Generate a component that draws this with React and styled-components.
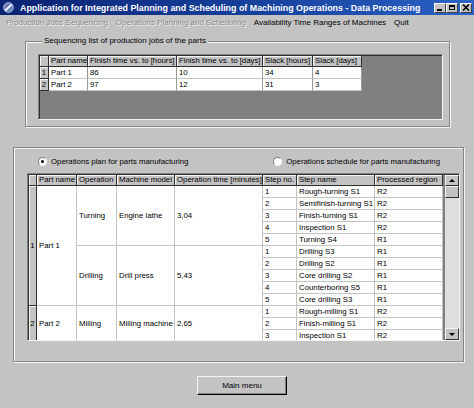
import React from 'react';
import styled, { createGlobalStyle } from 'styled-components';

const GlobalStyle = createGlobalStyle`
  html, body {
    margin: 0;
    padding: 0;
    background: #c3c3c3;
  }
  body {
    font-family: "Liberation Sans", Arial, sans-serif;
  }
`;

const sequencing = [
  ['Part 1', '86', '10', '34', '4'],
  ['Part 2', '97', '12', '31', '3'],
];

const plan = [
  {
    part: 'Part 1',
    ops: [
      {
        op: 'Turning', machine: 'Engine lathe', time: '3,04',
        steps: [['Rough-turning S1', 'R2'], ['Semifinish-turning S1', 'R2'], ['Finish-turning S1', 'R2'], ['Inspection S1', 'R2'], ['Turning S4', 'R1']],
      },
      {
        op: 'Drilling', machine: 'Drill press', time: '5,43',
        steps: [['Drilling S3', 'R1'], ['Drilling S2', 'R1'], ['Core drilling S2', 'R1'], ['Counterboring S5', 'R1'], ['Core drilling S3', 'R1']],
      },
    ],
  },
  {
    part: 'Part 2',
    ops: [
      {
        op: 'Milling', machine: 'Milling machine', time: '2,65',
        steps: [['Rough-milling S1', 'R2'], ['Finish-milling S1', 'R2'], ['Inspection S1', 'R2']],
      },
    ],
  },
];

const seqCols = [
  { w: 9, label: '' },
  { w: 39, label: 'Part name' },
  { w: 89, label: 'Finish time vs. to [hours]' },
  { w: 86, label: 'Finish time vs. to [days]' },
  { w: 50, label: 'Slack [hours]' },
  { w: 49, label: 'Slack [days]' },
];

const planCols = [
  { w: 8, label: '' },
  { w: 40, label: 'Part name' },
  { w: 40, label: 'Operation' },
  { w: 58, label: 'Machine model' },
  { w: 88, label: 'Operation time [minutes]' },
  { w: 34, label: 'Step no.' },
  { w: 78, label: 'Step name' },
  { w: 68, label: 'Processed region' },
];

function AppIcon() {
  return (
    <IconBox viewBox="0 0 12 12">
      <circle cx="6" cy="6" r="5.3" fill="#5d7fc9" stroke="#e8e8f0" strokeWidth="0.8" />
      <path d="M2.5 9.5 L9.5 2.5" stroke="#fff" strokeWidth="2" />
      <path d="M3 4 L5 3 L4 6 Z" fill="#e05a3a" />
      <path d="M7 8 L9 7 L8 9.5 Z" fill="#6cc060" />
    </IconBox>
  );
}

function Radio({ checked, children }) {
  return (
    <RadioLabel>
      <RadioCircle $checked={checked} />
      {children}
    </RadioLabel>
  );
}

export default function App() {
  return (
    <>
      <GlobalStyle />
      <Window>
        <TitleBar>
          <AppIcon />
          <TitleText>Application for Integrated Planning and Scheduling of Machining Operations - Data Processing</TitleText>
          <Controls>
            <CtrlButton>
              <MinGlyph />
            </CtrlButton>
            <CtrlButton>
              <MaxGlyph />
            </CtrlButton>
            <CtrlButton $gap>
              <svg width="8" height="7" viewBox="0 0 8 7">
                <path d="M1 0.5 L7 6.5 M7 0.5 L1 6.5" stroke="#000" strokeWidth="1.6" />
              </svg>
            </CtrlButton>
          </Controls>
        </TitleBar>

        <MenuBar>
          <MenuItem $disabled>Production Jobs Sequencing</MenuItem>
          <MenuItem $disabled>Operations Planning and Scheduling</MenuItem>
          <MenuItem>Availability Time Ranges of Machines</MenuItem>
          <MenuItem>Quit</MenuItem>
        </MenuBar>

        <Group $margin="7px 24px 0 25px" $padding="8px 6px 6px 12px">
          <Legend>Sequencing list of production jobs of the parts</Legend>
          <Grid $height={66}>
            <Table $width={322}>
              <colgroup>
                {seqCols.map((c, i) => <Col key={i} $w={c.w} />)}
              </colgroup>
              <thead>
                <tr>
                  {seqCols.map((c, i) => <HeadCell key={i}>{c.label}</HeadCell>)}
                </tr>
              </thead>
              <tbody>
                {sequencing.map((row, i) => (
                  <tr key={i}>
                    <IndCell>{i + 1}</IndCell>
                    {row.map((v, j) => <Cell key={j} $dark>{v}</Cell>)}
                  </tr>
                ))}
              </tbody>
            </Table>
          </Grid>
        </Group>

        <Group $margin="20px 10px 0 13px" $padding="7px 3px 20px 13px">
          <RadioRow>
            <Radio checked>Operations plan for parts manufacturing</Radio>
            <Radio>Operations schedule for parts manufacturing</Radio>
          </RadioRow>
          <Grid $height={168} $flex>
            <TableArea>
              <Table $width={414}>
                <colgroup>
                  {planCols.map((c, i) => <Col key={i} $w={c.w} />)}
                </colgroup>
                <thead>
                  <tr>
                    {planCols.map((c, i) => <HeadCell key={i}>{c.label}</HeadCell>)}
                  </tr>
                </thead>
                <tbody>
                  {plan.flatMap((p, pi) => {
                    const partSpan = p.ops.reduce((n, o) => n + o.steps.length, 0);
                    return p.ops.flatMap((o, oi) =>
                      o.steps.map((s, si) => (
                        <tr key={`${pi}-${oi}-${si}`}>
                          {oi === 0 && si === 0 && (
                            <>
                              <IndCell rowSpan={partSpan}>{pi + 1}</IndCell>
                              <Cell rowSpan={partSpan}>{p.part}</Cell>
                            </>
                          )}
                          {si === 0 && (
                            <>
                              <Cell rowSpan={o.steps.length}>{o.op}</Cell>
                              <Cell rowSpan={o.steps.length}>{o.machine}</Cell>
                              <Cell rowSpan={o.steps.length}>{o.time}</Cell>
                            </>
                          )}
                          <Cell>{si + 1}</Cell>
                          <Cell>{s[0]}</Cell>
                          <Cell>{s[1]}</Cell>
                        </tr>
                      ))
                    );
                  })}
                </tbody>
              </Table>
            </TableArea>
            <ScrollBar>
              <ScrollButton $h={11}>
                <Arrow $up />
              </ScrollButton>
              <ScrollButton $h={12} />
              <Track />
              <ScrollButton $h={12}>
                <Arrow />
              </ScrollButton>
            </ScrollBar>
          </Grid>
        </Group>

        <Footer>
          <MainButton>Main menu</MainButton>
        </Footer>
      </Window>
    </>
  );
}

const Window = styled.div`
  width: 474px;
  height: 408px;
  background: #c3c3c3;
  display: flex;
  flex-direction: column;
  overflow: hidden;
  font-size: 8px;
  color: #000;
`;

const TitleBar = styled.div`
  height: 15px;
  flex-shrink: 0;
  display: flex;
  align-items: center;
  padding: 0 2px 0 3px;
  background: linear-gradient(90deg, #0b2373 0%, #17429e 55%, #2a62c6 100%);
`;

const IconBox = styled.svg`
  width: 11px;
  height: 11px;
  flex-shrink: 0;
`;

const TitleText = styled.span`
  margin-left: 6px;
  color: #fff;
  font-weight: bold;
  font-size: 8.9px;
  white-space: nowrap;
`;

const Controls = styled.div`
  margin-left: auto;
  display: flex;
  align-items: center;
`;

const CtrlButton = styled.div`
  width: 12px;
  height: 10px;
  box-sizing: border-box;
  margin-left: ${p => (p.$gap ? '2px' : '0')};
  background: #c3c3c3;
  border: 1px solid;
  border-color: #fff #404040 #404040 #fff;
  display: flex;
  align-items: center;
  justify-content: center;
`;

const MinGlyph = styled.span`
  width: 5px;
  height: 2px;
  background: #000;
  margin-top: 4px;
  margin-right: 1px;
`;

const MaxGlyph = styled.span`
  width: 6px;
  height: 5px;
  box-sizing: border-box;
  border: 1px solid #000;
  border-top-width: 2px;
`;

const MenuBar = styled.div`
  height: 14px;
  flex-shrink: 0;
  display: flex;
  align-items: center;
  padding-left: 2px;
`;

const MenuItem = styled.span`
  padding: 0 4px;
  white-space: nowrap;
  color: ${p => (p.$disabled ? '#8c8c8c' : '#000')};
  text-shadow: ${p => (p.$disabled ? '1px 1px 0 #f4f4f4' : 'none')};
`;

const Group = styled.fieldset`
  margin: ${p => p.$margin};
  padding: ${p => p.$padding};
  border: 1px solid #868686;
  box-shadow: inset 1px 1px 0 #f4f4f4, 1px 1px 0 #f4f4f4;
  min-width: 0;
`;

const Legend = styled.legend`
  margin-left: 4px;
  padding: 0 2px;
  line-height: 10px;
  background: #c3c3c3;
`;

const Grid = styled.div`
  height: ${p => p.$height}px;
  box-sizing: border-box;
  background: #808080;
  border: 1px solid;
  border-color: #808080 #f4f4f4 #f4f4f4 #808080;
  box-shadow: inset 1px 1px 0 #303030;
  overflow: hidden;
  display: ${p => (p.$flex ? 'flex' : 'block')};
  padding: 1px 0 0 1px;
`;

const TableArea = styled.div`
  flex: 1;
  overflow: hidden;
  background: #808080;
`;

const Table = styled.table`
  border-collapse: separate;
  border-spacing: 0;
  table-layout: fixed;
  width: ${p => p.$width}px;
  font-size: 7.8px;
`;

const Col = styled.col`
  width: ${p => p.$w}px;
`;

const HeadCell = styled.th`
  padding: 0 1px 0 2px;
  line-height: 10px;
  font-weight: normal;
  text-align: left;
  white-space: nowrap;
  overflow: hidden;
  background: #c3c3c3;
  border-right: 1px solid #303030;
  border-bottom: 1px solid #303030;
  box-shadow: inset 1px 1px 0 #f4f4f4;
`;

const IndCell = styled.th`
  padding: 0 1px;
  line-height: 11px;
  font-weight: normal;
  text-align: center;
  vertical-align: middle;
  background: #c3c3c3;
  border-right: 1px solid #303030;
  border-bottom: 1px solid #303030;
  box-shadow: inset 1px 1px 0 #f4f4f4;
`;

const Cell = styled.td`
  padding: 0 1px 0 2px;
  line-height: 11px;
  white-space: nowrap;
  overflow: hidden;
  vertical-align: middle;
  background: #fff;
  border-right: 1px solid ${p => (p.$dark ? '#9a9a9a' : '#c4c4c4')};
  border-bottom: 1px solid #c4c4c4;
`;

const ScrollBar = styled.div`
  width: 14px;
  flex-shrink: 0;
  display: flex;
  flex-direction: column;
  background: #c3c3c3;
`;

const ScrollButton = styled.div`
  height: ${p => p.$h}px;
  flex-shrink: 0;
  box-sizing: border-box;
  background: #c3c3c3;
  border: 1px solid;
  border-color: #f4f4f4 #303030 #303030 #f4f4f4;
  display: flex;
  align-items: center;
  justify-content: center;
`;

const Track = styled.div`
  flex: 1;
  background: #dedede;
`;

const Arrow = styled.span`
  width: 0;
  height: 0;
  border-left: 3px solid transparent;
  border-right: 3px solid transparent;
  ${p => (p.$up ? 'border-bottom: 3px solid #000;' : 'border-top: 3px solid #000;')}
`;

const RadioRow = styled.div`
  height: 12px;
  display: flex;
  align-items: center;
  padding: 0 20px 0 11px;
  margin-bottom: 6px;
`;

const RadioLabel = styled.label`
  display: flex;
  align-items: center;
  gap: 4px;
  white-space: nowrap;
  font-size: 7.8px;
  &:last-child {
    margin-left: auto;
  }
`;

const RadioCircle = styled.span`
  width: 9px;
  height: 9px;
  box-sizing: border-box;
  border-radius: 50%;
  border: 1px solid;
  border-color: #808080 #f4f4f4 #f4f4f4 #808080;
  background: #fff;
  display: flex;
  align-items: center;
  justify-content: center;
  &::after {
    content: '';
    width: 3px;
    height: 3px;
    border-radius: 50%;
    background: ${p => (p.$checked ? '#000' : 'transparent')};
  }
`;

const Footer = styled.div`
  display: flex;
  justify-content: center;
  padding: 14px 0 0 10px;
`;

const MainButton = styled.button`
  width: 90px;
  height: 19px;
  padding: 0;
  font-family: inherit;
  font-size: 8px;
  color: #000;
  background: #c3c3c3;
  border: 1px solid;
  border-color: #f4f4f4 #000 #000 #f4f4f4;
  box-shadow: inset -1px -1px 0 #808080;
`;
